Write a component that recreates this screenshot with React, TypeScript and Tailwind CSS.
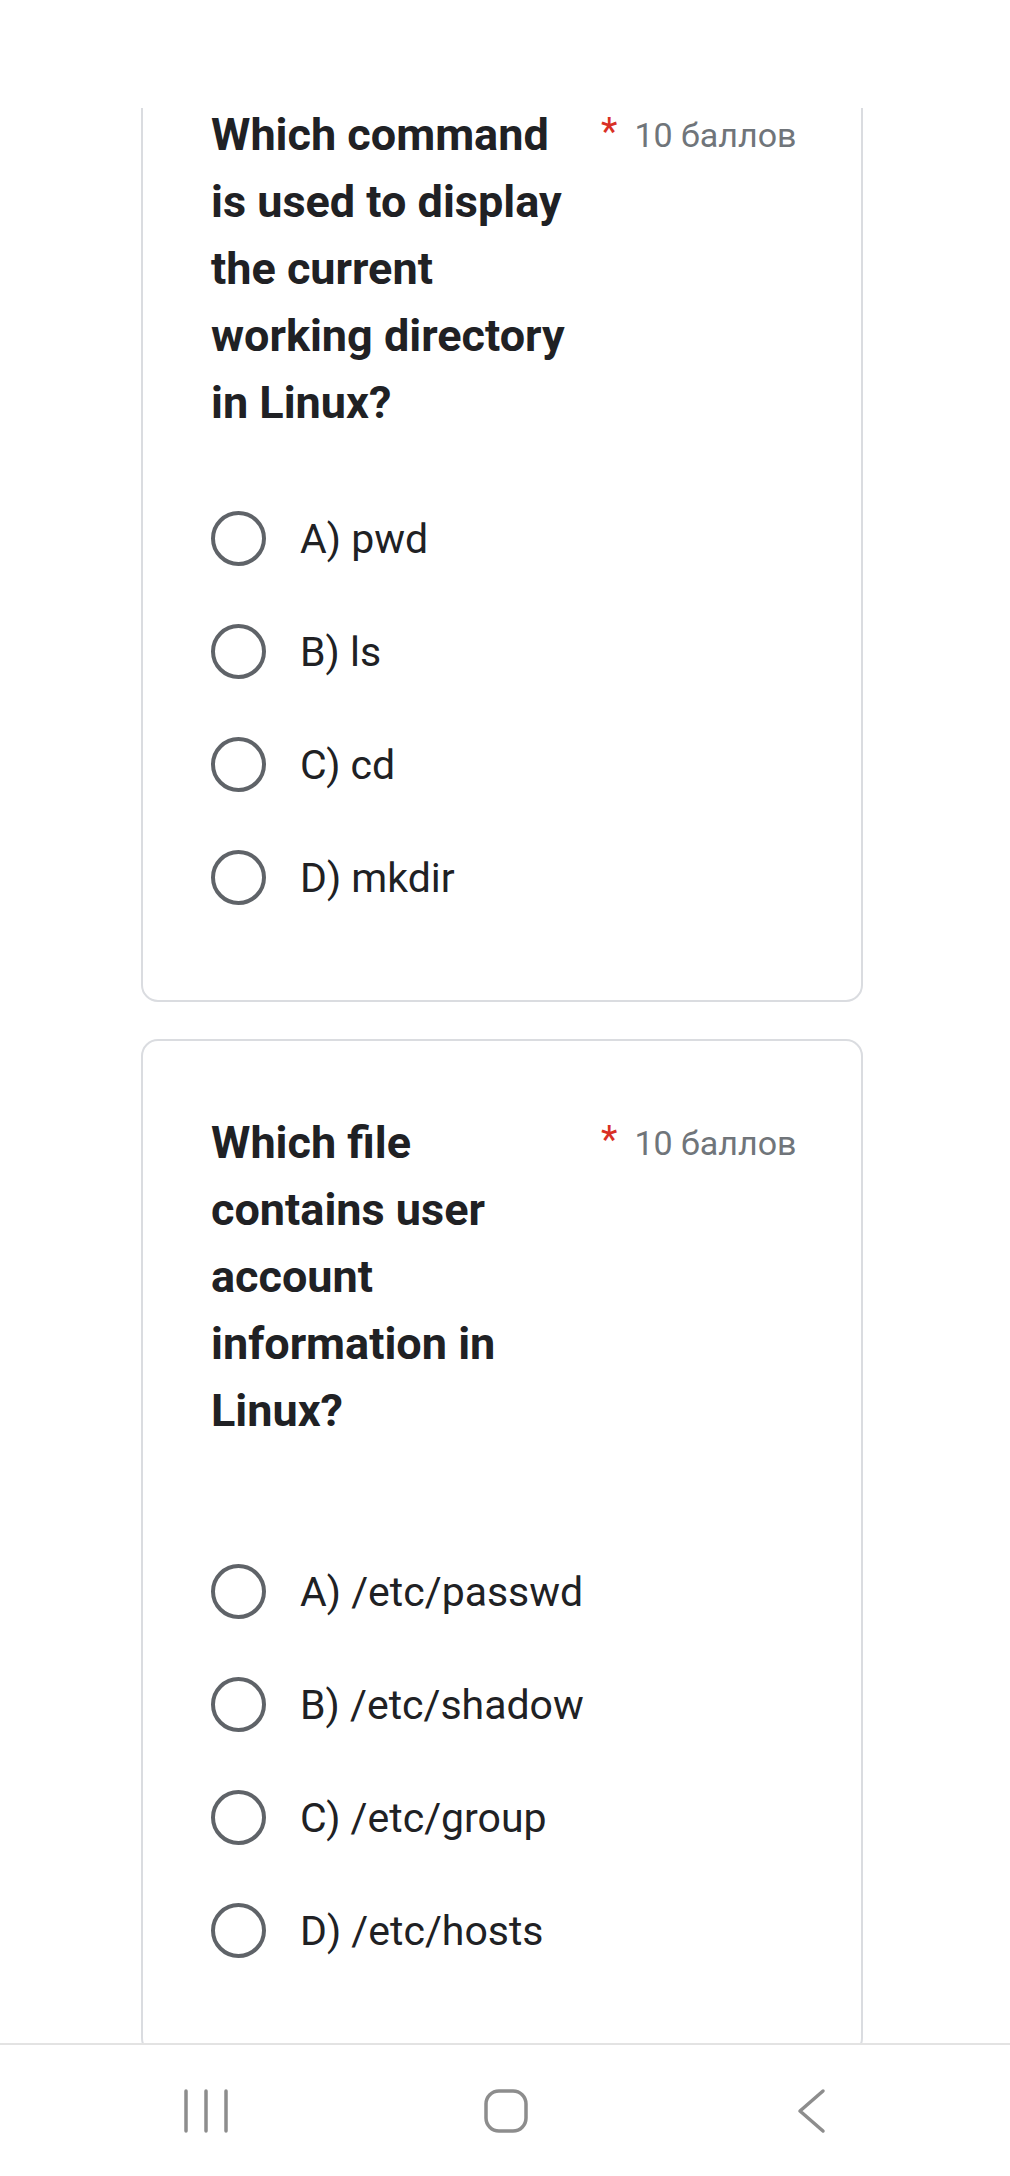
import React from "react";

type Question = {
  title: string;
  options: string[];
  gap: string;
};

const questions: Question[] = [
  {
    title: "Which command is used to display the current working directory in Linux?",
    options: ["A) pwd", "B) ls", "C) cd", "D) mkdir"],
    gap: "mt-[46px]",
  },
  {
    title: "Which file contains user account information in Linux?",
    options: ["A) /etc/passwd", "B) /etc/shadow", "C) /etc/group", "D) /etc/hosts"],
    gap: "mt-[91px]",
  },
];

function QuestionCard({ q }: { q: Question }) {
  return (
    <div className="w-[722px] rounded-[17px] border-2 border-[#dadce0] bg-white px-[68px] pt-[68px] pb-[66px]">
      {/* title + points */}
      <div className="flex items-start">
        <h2 className="w-[362px] shrink-0 text-[45px] leading-[67px] font-bold text-[#202124]">
          {q.title}
        </h2>
        <div className="ml-[28px] flex shrink-0 items-start pt-[12px] text-[34px] leading-[44px] whitespace-nowrap text-[#70757a]">
          <span className="mr-[17px] text-[38px] leading-[38px] text-[#d93025]">*</span>
          <span>10 баллов</span>
        </div>
      </div>

      {/* options */}
      <div className={`${q.gap} flex flex-col`}>
        {q.options.map((opt, idx) => (
          <div key={idx} className="flex h-[113px] items-center">
            <div className="h-[55px] w-[55px] shrink-0 rounded-full border-[4.5px] border-[#5f6368]" />
            <span className="ml-[34px] text-[41px] leading-[50px] text-[#202124]">{opt}</span>
          </div>
        ))}
      </div>
    </div>
  );
}

export default function App() {
  return (
    <div
      className="flex h-[2176px] w-[1010px] flex-col bg-white"
      style={{ fontFamily: "Roboto, 'Noto Sans', sans-serif" }}
    >
      {/* top bar (empty white) */}
      <div className="h-[108px] shrink-0 bg-white" />

      {/* scrolled content */}
      <div className="h-[1935px] shrink-0 overflow-hidden">
        <div className="mt-[-77px] flex flex-col items-start gap-[37px] pl-[141px]">
          {questions.map((q, idx) => (
            <QuestionCard key={idx} q={q} />
          ))}
        </div>
      </div>

      {/* android nav bar */}
      <div className="flex h-[133px] shrink-0 items-center border-t-2 border-[#e3e3e3] bg-white pl-[183px]">
        <svg width="46" height="46" viewBox="0 0 46 46" fill="none" stroke="#8d8d8d" strokeWidth="3.5" strokeLinecap="round">
          <line x1="3" y1="3" x2="3" y2="43" />
          <line x1="23" y1="3" x2="23" y2="43" />
          <line x1="43" y1="3" x2="43" y2="43" />
        </svg>
        <svg className="ml-[254px]" width="46" height="46" viewBox="0 0 46 46" fill="none" stroke="#8d8d8d" strokeWidth="3.5">
          <rect x="3" y="3" width="40" height="40" rx="13" />
        </svg>
        <svg className="ml-[267px]" width="30" height="46" viewBox="0 0 30 46" fill="none" stroke="#8d8d8d" strokeWidth="3.5" strokeLinecap="round" strokeLinejoin="round">
          <polyline points="27,3 4,23 27,43" />
        </svg>
      </div>
    </div>
  );
}
